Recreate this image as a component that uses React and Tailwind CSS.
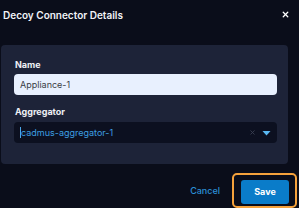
import React from "react";
import { X } from "lucide-react";

export default function App() {
    return (
        <div
            className="w-[299px] h-[208px] overflow-hidden bg-[#0a0d1a] text-white"
            style={{ fontFamily: "Inter, 'Noto Sans', sans-serif" }}
        >
            <div className="flex items-center justify-between h-[29px] pl-[3px] pr-[9px]">
                <h2 className="text-[10px] font-semibold text-[#f1f3f7] leading-none">
                    Decoy Connector Details
                </h2>
                <X className="w-[9px] h-[9px] text-white" strokeWidth={3.5} />
            </div>

            <div className="mt-[16px] ml-[1px] w-[287px] h-[119px] rounded-[4px] bg-[#1d2338] pt-[13px] pl-[13px]">
                <div className="text-[9px] font-bold text-[#eef0f5] leading-[14px] pl-[1px]">
                    Name
                </div>
                <div className="mt-[2px] w-[263px] h-[21px] rounded-[4px] bg-[#e8f0fe] flex items-center pl-[6px] text-[9px] text-[#3a3d44]">
                    Appliance-1
                </div>
                <div className="mt-[10px] text-[9px] font-bold text-[#eef0f5] leading-[14px] pl-[1px]">
                    Aggregator
                </div>
                <div className="mt-[3px] w-[263px] h-[21px] rounded-[4px] bg-[#0c1020] flex items-center pl-[6px] pr-[6px] text-[9px]">
                    <span className="w-px h-[11px] bg-[#4aa8ea]" />
                    <span className="text-[#3d9fe0]">cadmus-aggregator-1</span>
                    <span className="ml-auto flex items-center gap-[6px]">
                        <X className="w-[7px] h-[7px] text-[#3a4052]" strokeWidth={3} />
                        <svg width="9" height="6" viewBox="0 0 9 6">
                            <path d="M0.5 1 L8.5 1 L4.5 5.5 Z" fill="#5ab8f2" />
                        </svg>
                    </span>
                </div>
            </div>

            <div className="flex items-center justify-end mt-[9px] pr-[2px]">
                <button className="text-[9px] font-medium text-[#2a8fd8] mr-[12px]">
                    Cancel
                </button>
                <div className="rounded-[5px] border-2 border-[#f5a23c] pl-[7px] pr-[6px] py-[2px]">
                    <button className="w-[48px] h-[24px] rounded-[3px] bg-[#0a7cc9] text-[9px] font-bold text-white">
                        Save
                    </button>
                </div>
            </div>
        </div>
    );
}
